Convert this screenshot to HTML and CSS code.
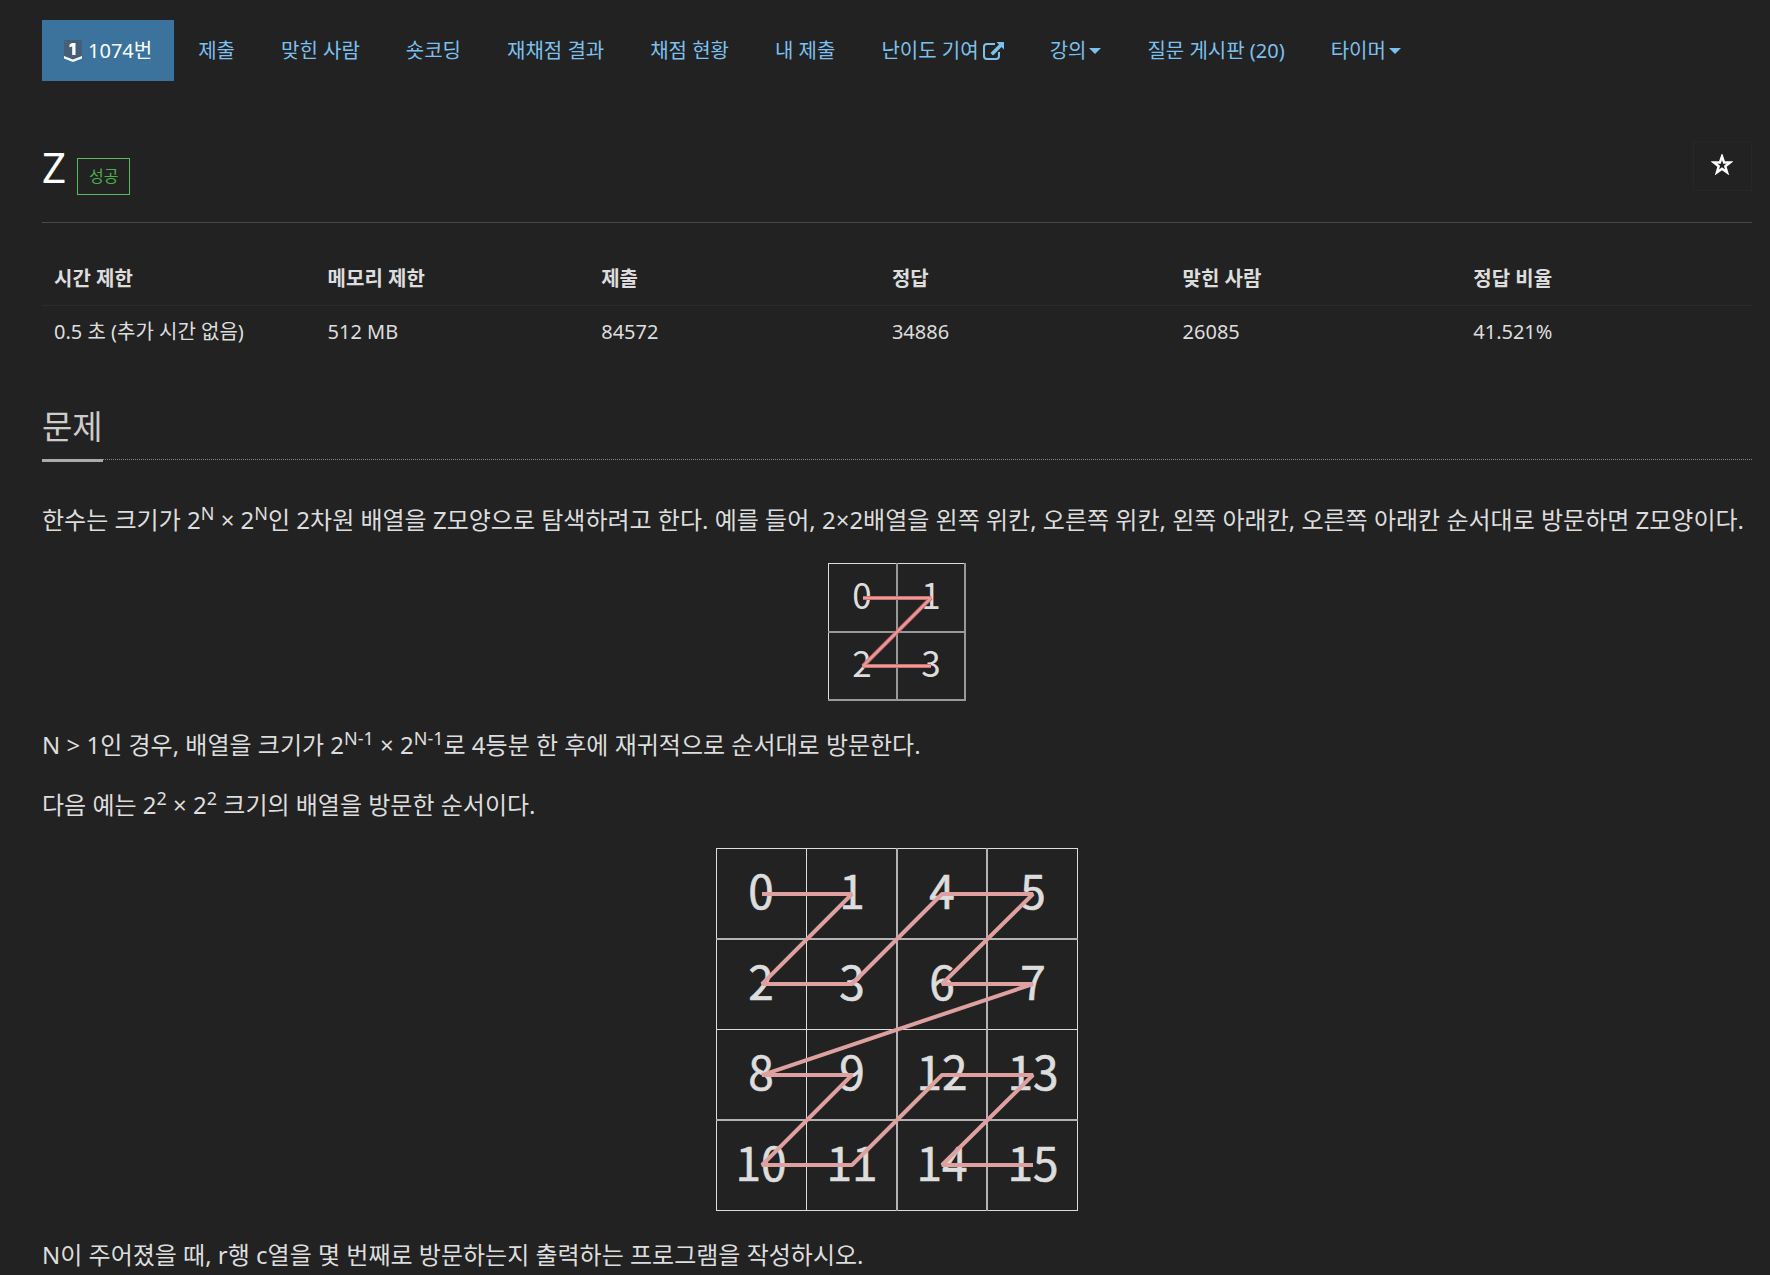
FILE: index.html
```html
<!DOCTYPE html>
<html lang="ko">
<head>
  <meta charset="UTF-8">
  <meta name="viewport" content="width=device-width, initial-scale=1.0">
  <title>1074번: Z</title>
  <link rel="stylesheet" href="styles.css">
</head>
<body>
  <nav>
    <ul class="problem-menu">
      <li class="active"><a href="#">
        <svg class="tier" viewBox="0 0 18 22" aria-hidden="true">
          <path d="M0 0h18v17l-9 5-9-5z" fill="#435f7a"/>
          <path d="M0 16l9 3.500 9-3.500v2.500l-9 3.500-9-3.500z" fill="#fff"/>
          <path d="M8 3h3.500v12H8.200V6.500l-2.700.8V4.500z" fill="#fff"/>
        </svg>
        1074번</a></li>
      <li><a href="#">제출</a></li>
      <li><a href="#">맞힌 사람</a></li>
      <li><a href="#">숏코딩</a></li>
      <li><a href="#">재채점 결과</a></li>
      <li><a href="#">채점 현황</a></li>
      <li><a href="#">내 제출</a></li>
      <li><a href="#">난이도 기여
        <svg class="external" viewBox="0 0 21 18" aria-hidden="true">
          <path d="M12 2H4a3 3 0 0 0-3 3v9a3 3 0 0 0 3 3h9a3 3 0 0 0 3-3v-4" fill="none" stroke="currentColor" stroke-width="2"/>
          <path d="M13.500 0H21v7.500l-2.500-2.500-8.500 8.500-2.500-2.500L16 2.500z" fill="currentColor"/>
        </svg></a></li>
      <li><a href="#">강의<span class="caret"></span></a></li>
      <li><a href="#">질문 게시판 (20)</a></li>
      <li><a href="#">타이머<span class="caret"></span></a></li>
    </ul>
  </nav>
  <main>
    <header class="page-header">
      <h1>Z</h1>
      <span class="label">성공</span>
      <button class="favorite" type="button" aria-label="즐겨찾기">
        <svg viewBox="0 0 22 21" aria-hidden="true">
          <path d="M11 2.500l2.100 6h6l-4.800 3.800 1.800 6.100-5.100-3.700-5.100 3.700 1.800-6.100L2.900 8.500h6z" fill="none" stroke="#fff" stroke-width="2.400"/>
        </svg>
      </button>
    </header>
    <table>
      <thead>
        <tr>
          <th class="limit">시간 제한</th>
          <th class="limit">메모리 제한</th>
          <th>제출</th>
          <th>정답</th>
          <th>맞힌 사람</th>
          <th>정답 비율</th>
        </tr>
      </thead>
      <tbody>
        <tr>
          <td>0.5 초 (추가 시간 없음)</td>
          <td>512 MB</td>
          <td>84572</td>
          <td>34886</td>
          <td>26085</td>
          <td>41.521%</td>
        </tr>
      </tbody>
    </table>
    <section>
      <div class="headline"><h2>문제</h2></div>
      <p>한수는 크기가 2<sup>N</sup> × 2<sup>N</sup>인 2차원 배열을 Z모양으로 탐색하려고 한다. 예를 들어, 2×2배열을 왼쪽 위칸, 오른쪽 위칸, 왼쪽 아래칸, 오른쪽 아래칸 순서대로 방문하면 Z모양이다.</p>
      <svg class="figure small" viewBox="0 0 138 138" role="img" aria-label="2×2 배열의 방문 순서">
        <g class="grid">
          <path d="M.5 0v138M0 .5h138"/>
          <path class="soft" d="M69 0v138M137 0v138M0 69h138M0 137h138"/>
        </g>
        <g class="digits">
          <text x="34" y="46">0</text><text x="103" y="46">1</text>
          <text x="34" y="114">2</text><text x="103" y="114">3</text>
        </g>
        <path class="route edge" d="M35 35h68L35 103h68"/>
        <path class="route" d="M35 35h68L35 103h68"/>
      </svg>
      <p>N &gt; 1인 경우, 배열을 크기가 2<sup>N-1</sup> × 2<sup>N-1</sup>로 4등분 한 후에 재귀적으로 순서대로 방문한다.</p>
      <p>다음 예는 2<sup>2</sup> × 2<sup>2</sup> 크기의 배열을 방문한 순서이다.</p>
      <svg class="figure large" viewBox="0 0 362 363" role="img" aria-label="4×4 배열의 방문 순서">
        <g class="grid">
          <path d="M.5 0v363M90.500 0v363M361.500 0v363M0 .5h362M0 181.500h362M0 362.500h362"/>
          <path class="soft" d="M181 0v363M271 0v363M0 91h362M0 272h362"/>
        </g>
        <g class="digits">
          <text x="45" y="61">0</text><text x="136" y="61">1</text><text x="226" y="61">4</text><text x="317" y="61">5</text>
          <text x="45" y="152">2</text><text x="136" y="152">3</text><text x="226" y="152">6</text><text x="317" y="152">7</text>
          <text x="45" y="242">8</text><text x="136" y="242">9</text><text x="226" y="242">12</text><text x="317" y="242">13</text>
          <text x="45" y="333">10</text><text x="136" y="333">11</text><text x="226" y="333">14</text><text x="317" y="333">15</text>
        </g>
        <path class="route" d="M46 46h90L46 136h90l90-90h91l-91 90h91L46 227h90L46 317h90l90-90h91l-91 90h91"/>
      </svg>
      <p>N이 주어졌을 때, r행 c열을 몇 번째로 방문하는지 출력하는 프로그램을 작성하시오.</p>
    </section>
  </main>
</body>
</html>
```
FILE: styles.css
```css
* {
  box-sizing: border-box;
}
body {
  margin: 0;
  padding: 20px 18px 0 42px;
  background: #222;
  color: #ddd;
  font: 20px/30px "Noto Sans", "Noto Sans CJK KR", sans-serif;
}
h1, h2, p {
  margin: 0;
  font-weight: 400;
}
.problem-menu {
  display: flex;
  flex-wrap: wrap;
  gap: 2px;
  margin: 0;
  padding: 0;
  list-style: none;
}
.problem-menu a {
  display: flex;
  align-items: center;
  padding: 16px 22px 15px;
  color: #7cc1ee;
  text-decoration: none;
  white-space: nowrap;
}
.problem-menu .active a {
  background: #3b739c;
  color: #fff;
}
.tier {
  width: 18px;
  height: 22px;
  margin-right: 6px;
}
.external {
  width: 21px;
  height: 18px;
  margin-left: 4px;
}
.caret {
  margin-left: 3px;
  border: 6px solid transparent;
  border-top-color: currentColor;
  border-bottom: 0;
}
.page-header {
  display: flex;
  align-items: flex-end;
  height: 82px;
  margin-top: 60px;
  padding-bottom: 27px;
  border-bottom: 1px solid #484848;
}
h1 {
  color: #fff;
  font-size: 42px;
  line-height: 56px;
}
.label {
  margin-left: 11px;
  padding: 0 11px;
  border: 1px solid #5cb85c;
  color: #4cae4c;
  font-size: 16px;
  line-height: 35px;
}
.favorite {
  display: flex;
  align-items: center;
  justify-content: center;
  width: 59px;
  height: 50px;
  margin: 0 0 4px auto;
  padding: 0 2px 4px 0;
  border: 1px solid #272727;
  background: #222;
}
.favorite svg {
  width: 22px;
  height: 21px;
}
table {
  width: 100%;
  margin-top: 30px;
  border-collapse: collapse;
  table-layout: fixed;
}
th, td {
  width: 17%;
  padding: 11px 12px;
  text-align: left;
}
th {
  border-bottom: 1px solid #2c2c2c;
}
.limit {
  width: 16%;
}
.headline {
  margin: 45px 0 37px;
  border-bottom: 1px dotted #888;
}
h2 {
  display: inline-block;
  margin-bottom: -3px;
  padding-bottom: 8px;
  border-bottom: 3px solid #aaa;
  color: #ccc;
  font-size: 33px;
  line-height: 48px;
  vertical-align: top;
}
p {
  margin-bottom: 15px;
  font-size: 24px;
  line-height: 45px;
}
sup {
  position: relative;
  top: -9px;
  font-size: 18px;
  line-height: 0;
  vertical-align: baseline;
}
.figure {
  display: block;
  margin: 21px auto;
}
.small {
  width: 138px;
  height: 138px;
}
.large {
  width: 362px;
  height: 363px;
}
.grid {
  fill: none;
  stroke: #ddd;
}
.grid .soft {
  stroke: #999;
  stroke-width: 2;
}
.large .soft {
  stroke: #b5b2b5;
}
.digits {
  fill: #ddd;
  font-family: "Noto Sans CJK KR", sans-serif;
  font-size: 35px;
  text-anchor: middle;
}
.large .digits {
  stroke: #ddd;
  stroke-width: .6;
  font-size: 46px;
}
.route {
  fill: none;
  stroke: #dfa0a0;
  stroke-width: 4;
  stroke-linejoin: bevel;
}
.small .route {
  stroke-width: 2;
}
.small .edge {
  stroke: #d96a6a;
  stroke-width: 4;
}
```
